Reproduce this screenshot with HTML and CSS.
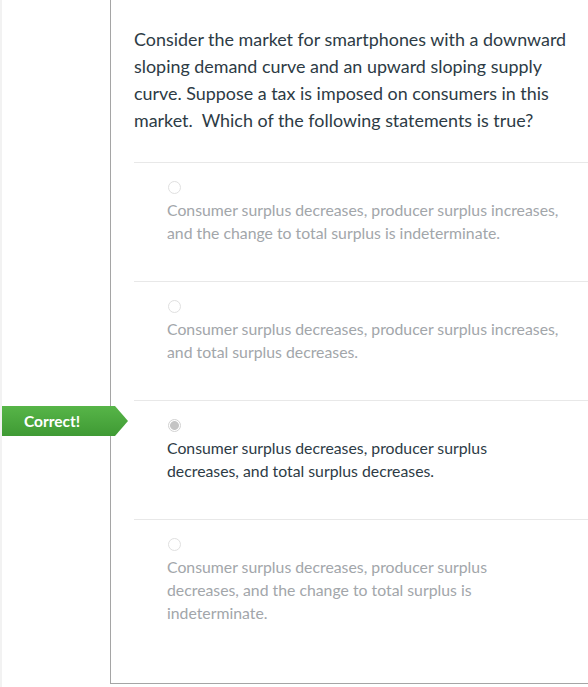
FILE: index.html
```html
<!DOCTYPE html>
<html>
<head>
<meta charset="utf-8">
<link rel="stylesheet" href="styles.css">
</head>
<body>
<div class="page">
  <div class="gutter"></div>
  <div class="quiz">
    <p class="question">Consider the market for smartphones with a downward sloping demand curve and an upward sloping supply curve. Suppose a tax is imposed on consumers in this market.&nbsp; Which of the following statements is true?</p>
    <div class="answers">
      <div class="answer">
        <span class="radio"></span>
        <div class="text">Consumer surplus decreases, producer surplus increases, and the change to total surplus is indeterminate.</div>
      </div>
      <div class="answer">
        <span class="radio"></span>
        <div class="text">Consumer surplus decreases, producer surplus increases, and total surplus decreases.</div>
      </div>
      <div class="answer selected">
        <div class="badge">Correct!</div>
        <span class="radio checked"></span>
        <div class="text">Consumer surplus decreases, producer surplus decreases, and total surplus decreases.</div>
      </div>
      <div class="answer last">
        <span class="radio"></span>
        <div class="text">Consumer surplus decreases, producer surplus decreases, and the change to total surplus is indeterminate.</div>
      </div>
    </div>
  </div>
</div>
</body>
</html>
```

FILE: styles.css
```css
html, body {
  margin: 0;
  padding: 0;
  background: #fff;
  font-family: Lato, "Open Sans", sans-serif;
}
.page {
  display: flex;
  width: 588px;
  height: 687px;
  overflow: hidden;
}
.gutter {
  width: 108px;
  flex: none;
  border-left: 2px solid #f2f2f2;
}
.quiz {
  flex: 1;
  height: 684px;
  box-sizing: border-box;
  border-left: 1px solid #a5a5a5;
  border-bottom: 1px solid #a5a5a5;
  padding-left: 23px;
}
.question {
  margin: 26px 0 28px 0;
  width: 442px;
  font-size: 17.9px;
  line-height: 27px;
  color: #2d3b45;
}
.answer {
  position: relative;
  border-top: 1px solid #e8e8e8;
  padding: 18px 0 35px 33px;
  min-height: 65px;
}
.radio {
  display: block;
  width: 11px;
  height: 11px;
  margin-left: 1px;
  border: 1px solid #e0e0e0;
  border-radius: 50%;
  background: #fff;
}
.radio.checked {
  border-color: #d2d2d2;
  background: radial-gradient(circle, #c4c4c4 0, #c4c4c4 4px, #fff 4.8px);
}
.text {
  width: 393px;
  margin-top: 4px;
  font-size: 15.8px;
  line-height: 23px;
  color: #a2a6aa;
}
.selected .text {
  color: #2d3b45;
}
.badge {
  position: absolute;
  left: -132px;
  top: 5px;
  width: 126px;
  height: 30px;
  box-sizing: border-box;
  padding-left: 22px;
  background: linear-gradient(#57b548, #3f9a34);
  clip-path: polygon(0 0, 113px 0, 126px 15px, 113px 30px, 0 30px);
  color: #fff;
  font-weight: bold;
  font-size: 15.5px;
  line-height: 30px;
}
```
